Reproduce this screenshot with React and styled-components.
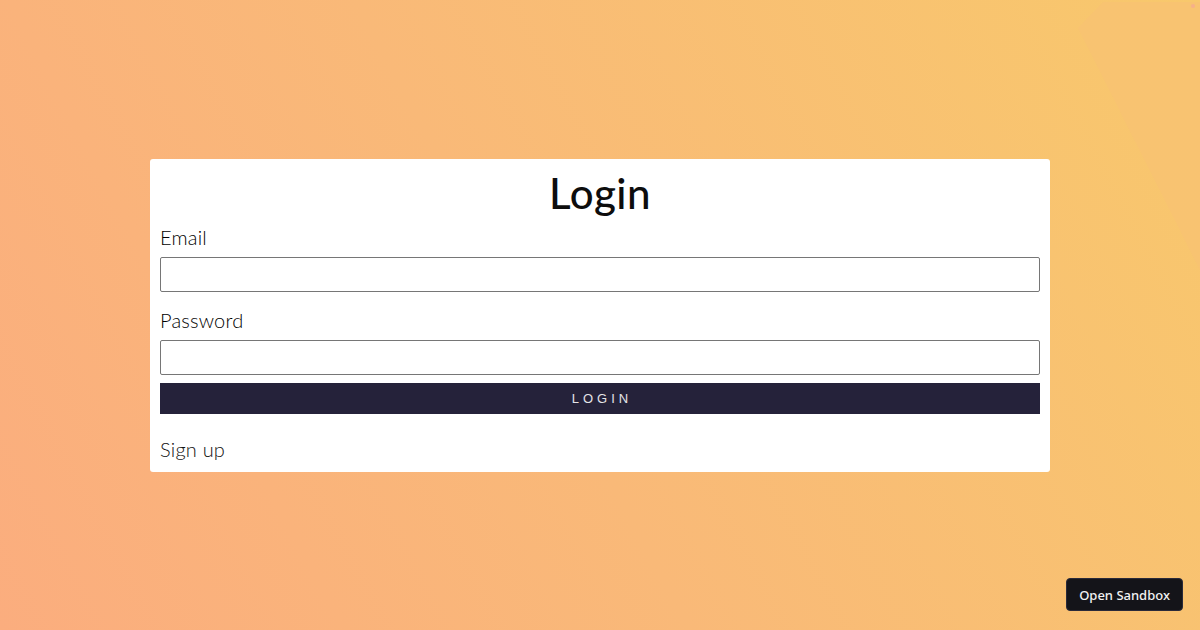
import React from 'react';
import styled, { createGlobalStyle } from 'styled-components';

const GlobalStyle = createGlobalStyle`
  html, body {
    margin: 0;
    padding: 0;
  }
  body {
    font-family: 'Lato', 'Open Sans', sans-serif;
  }
  * {
    box-sizing: border-box;
  }
`;

const Page = styled('div')`
  position: relative;
  min-height: 100vh;
  display: flex;
  align-items: center;
  justify-content: center;
  overflow: hidden;
  background: linear-gradient(62deg, #fbad7e 0%, #f9b978 45%, #f8c86c 100%);
`;

const Facet = styled('svg')`
  position: absolute;
  top: 0;
  right: 0;
  width: 130px;
  height: 280px;
  pointer-events: none;
`;

const Card = styled('form')`
  position: relative;
  width: 75%;
  background: white;
  border-radius: 3px;
  padding: 10px 10px 11px;
  display: flex;
  flex-direction: column;
`;

const Title = styled('h1')`
  margin: 0 0 8px;
  font-size: 42px;
  line-height: 48px;
  font-weight: 500;
  letter-spacing: 0.5px;
  text-align: center;
  color: #0d0d0d;
`;

const Label = styled('label')`
  display: block;
  margin-bottom: 8px;
  font-size: 20px;
  line-height: 24px;
  font-weight: 300;
  letter-spacing: 0.2px;
  color: #000;
`;

const Field = styled('div')`
  margin-bottom: ${(p) => (p.last ? '8px' : '16px')};
`;

const Input = styled('input')`
  display: block;
  width: 100%;
  height: 35px;
  border: 1px solid #767676;
  border-radius: 2px;
  padding: 0 8px;
  font-size: 16px;
  background: white;
`;

const Button = styled('button')`
  height: 31px;
  border: none;
  background: #25223a;
  color: #e4e4e8;
  font-family: 'Liberation Sans', Arial, sans-serif;
  font-size: 13px;
  letter-spacing: 4px;
  text-indent: 4px;
  cursor: pointer;
`;

const SignUp = styled('a')`
  margin-top: 23px;
  font-size: 20px;
  line-height: 24px;
  font-weight: 300;
  letter-spacing: 0.2px;
  color: #111;
  text-decoration: none;
`;

const SandboxButton = styled('a')`
  position: absolute;
  right: 17px;
  bottom: 19px;
  height: 33px;
  padding: 0 12px;
  display: flex;
  align-items: center;
  background: #141419;
  border: 1px solid #2a2a3a;
  border-radius: 4px;
  color: #f2f2f2;
  font-family: 'Noto Sans', 'Open Sans', sans-serif;
  font-size: 13px;
  font-weight: 500;
  text-decoration: none;
`;

const App = () => (
  <Page>
    <GlobalStyle />
    <Facet viewBox="0 0 130 280">
      <polygon points="33,2 130,2 130,270 8,28" fill="#f8c173" opacity="0.75" />
      <circle cx="123" cy="6" r="2" fill="#f6b08a" />
    </Facet>
    <Card onSubmit={(e) => e.preventDefault()}>
      <Title>Login</Title>
      <Field>
        <Label htmlFor="email">Email</Label>
        <Input id="email" type="email" />
      </Field>
      <Field last>
        <Label htmlFor="password">Password</Label>
        <Input id="password" type="password" />
      </Field>
      <Button type="submit">LOGIN</Button>
      <SignUp href="#">Sign up</SignUp>
    </Card>
    <SandboxButton href="#">Open Sandbox</SandboxButton>
  </Page>
);

export default App;
